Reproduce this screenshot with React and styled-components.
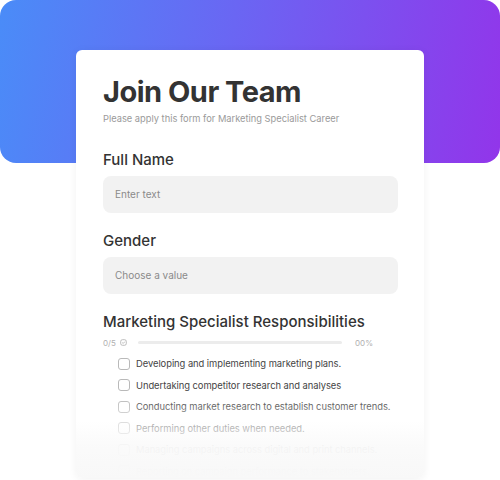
import React from "react";
import styled, { createGlobalStyle } from "styled-components";

const Global = createGlobalStyle`
  body {
    margin: 0;
    background: #ffffff;
    font-family: Inter, "Noto Sans", sans-serif;
  }
`;

const Page = styled.div`
  width: 500px;
  height: 480px;
  overflow: hidden;
`;

const Banner = styled.div`
  height: 163px;
  border-radius: 16px;
  background: linear-gradient(100deg, #4a8cf8 0%, #6a66f3 45%, #9235ea 100%);
`;

const Card = styled.div`
  position: relative;
  margin: -113px auto 0;
  width: 348px;
  height: 428px;
  box-sizing: border-box;
  padding: 24px 26px 0 27px;
  background: #ffffff;
  border-radius: 6px;
  box-shadow: 0 1px 8px rgba(0, 0, 0, 0.06);
  overflow: hidden;
  display: flex;
  flex-direction: column;
`;

const Fade = styled.div`
  position: absolute;
  left: 0;
  right: 0;
  bottom: 0;
  height: 82px;
  background: linear-gradient(
    to bottom,
    rgba(255, 255, 255, 0) 0%,
    rgba(255, 255, 255, 0.5) 30%,
    rgba(250, 250, 250, 0.96) 62%,
    rgba(248, 248, 248, 1) 100%
  );
`;

const Title = styled.h1`
  margin: 0;
  font-size: 29px;
  line-height: 36px;
  font-weight: 700;
  letter-spacing: -0.5px;
  color: #333333;
`;

const Subtitle = styled.p`
  margin: 2px 0 0;
  font-size: 9.3px;
  line-height: 14px;
  color: #9a9a9a;
`;

const Label = styled.h2`
  margin: ${(p) => p.$top}px 0 0;
  font-size: 15px;
  line-height: 20px;
  font-weight: 500;
  color: #333333;
`;

const Field = styled.div`
  margin-top: 6px;
  height: 37px;
  border-radius: 8px;
  background: #f2f2f2;
  display: flex;
  align-items: center;
  padding: 0 12px;
  font-size: 10px;
  color: #8a8a8a;
`;

const Progress = styled.div`
  margin: 6px 25px 0 0;
  height: 10px;
  display: flex;
  align-items: center;
  gap: 4px;
  font-size: 8px;
  color: #b0b0b0;
`;

const Track = styled.div`
  flex: 1;
  height: 3px;
  margin: 0 9px 0 7px;
  border-radius: 2px;
  background: #ececec;
`;

const List = styled.ul`
  list-style: none;
  margin: 9px 0 0;
  padding: 0 0 0 15px;
  display: flex;
  flex-direction: column;
  gap: 7.5px;
`;

const Item = styled.li`
  display: flex;
  align-items: center;
  gap: 6px;
  height: 14px;
  white-space: nowrap;
  font-size: 9.4px;
  letter-spacing: -0.05px;
  color: #444444;
`;

const Box = styled.span`
  width: 10px;
  height: 10px;
  border: 1px solid #b9b9b9;
  border-radius: 3px;
  flex-shrink: 0;
`;

const CheckIcon = () => (
  <svg width="7" height="7" viewBox="0 0 10 10" fill="none" stroke="#b0b0b0" strokeWidth="1.2">
    <rect x="1" y="1" width="8" height="8" rx="2.5" />
    <path d="M3.2 5.1l1.4 1.3 2.3-2.6" />
  </svg>
);

const tasks = [
  "Developing and implementing marketing plans.",
  "Undertaking competitor research and analyses",
  "Conducting market research to establish customer trends.",
  "Performing other duties when needed.",
  "Managing campaigns across digital and print channels.",
  "Reporting on campaign performance to stakeholders.",
];

export default function App() {
  return (
    <Page>
      <Global />
      <Banner />
      <Card>
        <Title>Join Our Team</Title>
        <Subtitle>Please apply this form for Marketing Specialist Career</Subtitle>

        <Label $top={24}>Full Name</Label>
        <Field>Enter text</Field>

        <Label $top={18}>Gender</Label>
        <Field>Choose a value</Field>

        <Label $top={18}>Marketing Specialist Responsibilities</Label>
        <Progress>
          <span>0/5</span>
          <CheckIcon />
          <Track />
          <span>00%</span>
        </Progress>
        <List>
          {tasks.map((t) => (
            <Item key={t}>
              <Box />
              {t}
            </Item>
          ))}
        </List>
        <Fade />
      </Card>
    </Page>
  );
}
